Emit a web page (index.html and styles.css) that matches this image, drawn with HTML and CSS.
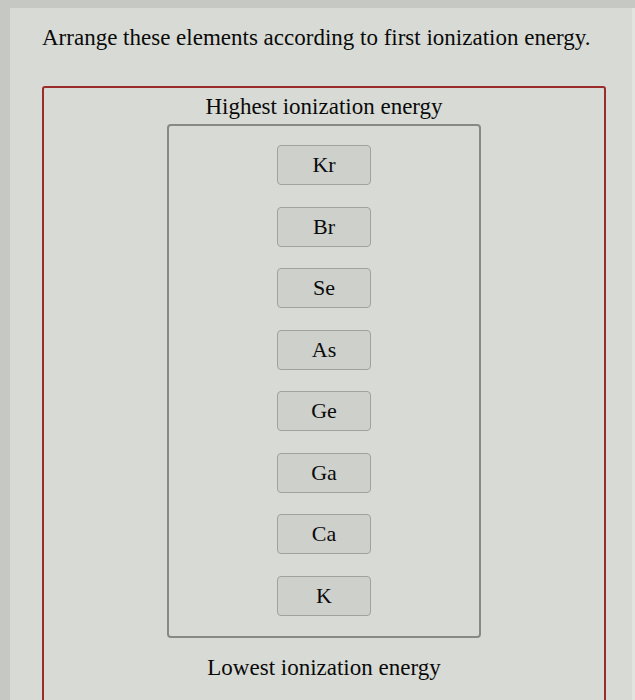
FILE: index.html
```html
<!DOCTYPE html>
<html lang="en">

<head>
    <meta charset="UTF-8">
    <meta name="viewport" content="width=device-width, initial-scale=1.0">
    <title>Ionization Energy</title>
    <link rel="stylesheet" href="styles.css">
</head>

<body>
    <div class="sheet">
        <p class="prompt">Arrange these elements according to first ionization energy.</p>

        <div class="answer">
            <p class="label">Highest ionization energy</p>
            <ul class="slots">
                <li class="tile">Kr</li>
                <li class="tile">Br</li>
                <li class="tile">Se</li>
                <li class="tile">As</li>
                <li class="tile">Ge</li>
                <li class="tile">Ga</li>
                <li class="tile">Ca</li>
                <li class="tile">K</li>
            </ul>
            <p class="label">Lowest ionization energy</p>
        </div>
    </div>
</body>

</html>
```

FILE: styles.css
```css
html, body {
    margin: 0;
    height: 100%;
}

body {
    background-color: #c6c8c3;
    font-family: "Liberation Serif", "Times New Roman", serif;
    color: #0a0a0a;
    padding: 8px 0 0 10px;
    box-sizing: border-box;
    overflow: hidden;
}

.sheet {
    background-color: #d8dbd5;
    height: 100%;
    padding: 0 27px 0 32px;
    border-right: 3px solid #e2e4df;
}

.prompt {
    margin: 0;
    padding-top: 16px;
    font-size: 23px;
    line-height: 28px;
}

.answer {
    margin-top: 34px;
    width: 560px;
    height: 640px;
    border: 2px solid #9c2b2b;
    border-radius: 3px;
    display: flex;
    flex-direction: column;
    align-items: center;
}

.label {
    margin: 0;
    font-size: 23px;
    line-height: 26px;
    padding-top: 6px;
}

.slots {
    list-style: none;
    margin: 4px 0 11px;
    padding: 19px 0 20px;
    width: 310px;
    border: 2px solid #878985;
    border-radius: 4px;
    display: flex;
    flex-direction: column;
    align-items: center;
    gap: 21.5px;
}

.tile {
    width: 94px;
    height: 40px;
    box-sizing: border-box;
    border: 1px solid #a0a29e;
    border-radius: 4px;
    background-color: #cdd0cb;
    display: flex;
    align-items: center;
    justify-content: center;
    font-size: 22px;
}
```
